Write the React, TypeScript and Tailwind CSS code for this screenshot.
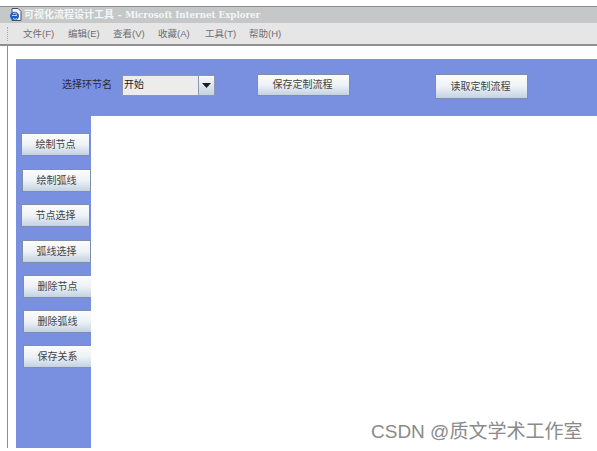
const cjk = { fontFamily: '"Liberation Sans","Noto Sans CJK SC",sans-serif' };

function Btn({ label, className }: { label: string; className: string }) {
  return (
    <button className={"flex items-center justify-center border border-[#7f8ea6] bg-gradient-to-b from-[#fbfcfd] via-[#eef2f6] to-[#c3d2e2] text-[10px] leading-none text-[#444] shrink-0 " + className}>
      {label}
    </button>
  );
}

const menus: [string, string][] = [
  ["文件(F)", "w-[45px]"],
  ["编辑(E)", "w-[45px]"],
  ["查看(V)", "w-[45px]"],
  ["收藏(A)", "w-[47px]"],
  ["工具(T)", "w-[44px]"],
  ["帮助(H)", "w-[45px]"],
];
const side: [string, string][] = [
  ["绘制节点", "ml-[5px] mt-[17px]"],
  ["绘制弧线", "ml-[6px] mt-[13px]"],
  ["节点选择", "ml-[5px] mt-[12px]"],
  ["弧线选择", "ml-[6px] mt-[13px]"],
  ["删除节点", "ml-[7px] mt-[12px]"],
  ["删除弧线", "ml-[7px] mt-[12px]"],
  ["保存关系", "ml-[7px] mt-[12px]"],
];

export default function App() {
  return (
    <div className="relative w-[597px] h-[451px] overflow-hidden bg-white" style={cjk}>
      <div className="h-[6px] bg-white" />
      {/* title bar */}
      <div className="h-[17px] flex items-center border-t border-[#8c8c8c] bg-[#c4c8c8] pl-[9px]">
        <svg width="13" height="14" viewBox="0 0 13 14" className="shrink-0">
          <path d="M3 0.5h6l3 3v9H3z" fill="#f6f7fa" stroke="#4a5068" />
          <ellipse cx="5.5" cy="8" rx="4.5" ry="4.2" fill="#1f5fc4" />
          <path d="M3 7.5h5M4 5.5a3 3 0 0 1 4 1M4 10.5a3 3 0 0 0 4 0" stroke="#bcd4f4" strokeWidth="1" fill="none" />
        </svg>
        <span className="ml-[2px] text-[10px] font-bold leading-none text-[#f4f6f6] whitespace-nowrap" style={{ fontFamily: '"DejaVu Serif","Noto Sans CJK SC",serif' }}>
          可视化流程设计工具 - <span className="text-[8.7px]">Microsoft Internet Explorer</span>
        </span>
      </div>
      {/* menu bar */}
      <div className="h-[23px] flex items-center border-b-2 border-[#8f8f8f] bg-[#e6e6e6] pl-[7px]">
        <div className="h-[14px] border-l border-dotted border-[#a8a8a8]" />
        <div className="flex ml-[15px] text-[9.5px] leading-none text-[#6e6e6e]">
          {menus.map(([m, w]) => (
            <span key={m} className={"whitespace-nowrap " + w}>{m}</span>
          ))}
        </div>
      </div>
      {/* page */}
      <div className="ml-[7px] h-[402px] border-l border-[#8f8f8f] pl-[8px] pt-[13px]">
        <div className="h-[389px] flex flex-col bg-[#7990e0]">
          <div className="h-[57px] shrink-0 flex items-start pt-[15px]">
            <span className="ml-[46px] mt-[5px] w-[50px] text-[10px] leading-[12px] text-[#2a2a3a] whitespace-nowrap">选择环节名</span>
            <div className="ml-[10px] mt-[1px] w-[93px] h-[21px] flex border border-[#8a97ac] bg-[#ececec]">
              <span className="flex-1 pl-[1px] text-[10px] leading-[18px] text-[#222]">开始</span>
              <div className="w-[16px] flex items-center justify-center border-l border-[#8a97ac] bg-gradient-to-b from-[#f8fafc] to-[#c3d2e2]">
                <svg width="9" height="5" viewBox="0 0 9 5"><path d="M0 0h9L4.5 5z" fill="#1c1c1c" /></svg>
              </div>
            </div>
            <Btn label="保存定制流程" className="ml-[42px] w-[93px] h-[22px] pr-[2px]" />
            <Btn label="读取定制流程" className="ml-[85px] w-[93px] h-[25px] pr-[2px]" />
          </div>
          <div className="flex-1 flex min-h-0">
            <div className="w-[75px] shrink-0 flex flex-col items-start">
              {side.map(([label, cls]) => (
                <Btn key={label} label={label} className={"w-[69px] h-[23px] " + cls} />
              ))}
            </div>
            <div className="flex-1 bg-white" />
          </div>
        </div>
      </div>
      <span className="absolute left-[371px] top-[421px] text-[19px] leading-[22px] text-[#8a8a8a] whitespace-nowrap">CSDN @质文学术工作室</span>
    </div>
  );
}
